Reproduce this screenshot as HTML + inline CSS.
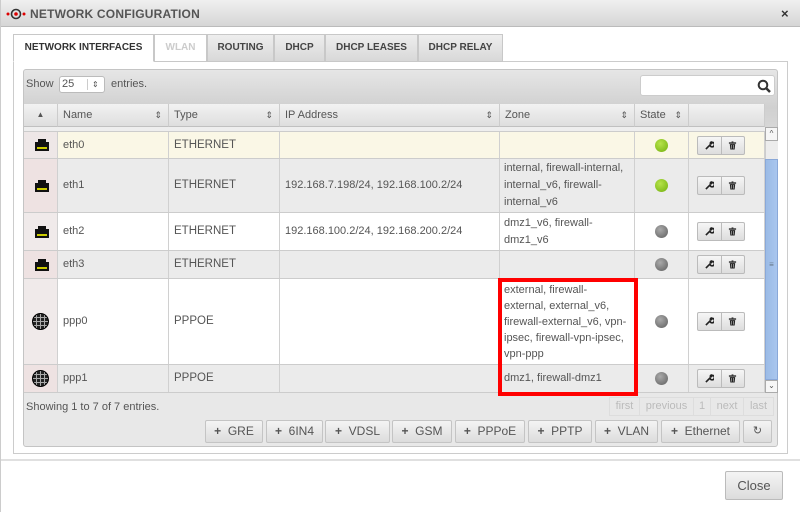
<!DOCTYPE html>
<html><head><meta charset="utf-8"><style>
*{box-sizing:border-box;margin:0;padding:0}
body{width:800px;height:512px;overflow:hidden;background:#fff;font-family:"Liberation Sans",sans-serif;font-size:11px;color:#555;position:relative}
.a{position:absolute}
.title{left:0;top:0;width:800px;height:27px;background:linear-gradient(#f0f0f0,#d6d6d6);border-bottom:1px solid #bbb;border-left:1px solid #ccc}
.tab{top:34px;height:28px;border:1px solid #c8c8c8;background:linear-gradient(#eee,#d8d8d8);font-weight:bold;color:#444;text-align:center;line-height:26px;font-size:10px}
.panel{left:13px;top:61px;width:775px;height:393px;border:1px solid #ccc}
.box{left:23px;top:69px;width:755px;height:378px;border:1px solid #c4c4c4;border-radius:3px;background:linear-gradient(#e6e6e6,#d0d0d0 10%,#e8e8e8 30%)}
.hdr{top:104px;height:23px;background:linear-gradient(#f2f2f2,#dedede);border-bottom:1px solid #c0c0c0;border-right:1px solid #ccc;line-height:22px;padding-left:5px;color:#555;font-size:11px}
.row{left:24px;width:741px;border-bottom:1px solid #ccc}
.c{position:absolute;top:0;bottom:0;border-right:1px solid #d0d0d0;padding-left:5px;display:flex;align-items:center;line-height:17px}
.srt{position:absolute;right:6px;top:0;font-size:9px}
.dot{width:13px;height:13px;border-radius:50%;margin-left:15px}
.g{background:radial-gradient(circle at 40% 35%,#b6e34a,#72b00e)}
.k{background:radial-gradient(circle at 40% 35%,#aaa,#5e5e5e)}
.act{margin-left:8px;width:48px;height:19px;border:1px solid #bbb;border-radius:2px;background:linear-gradient(#f6f6f6,#ddd);display:flex}
.act span{flex:1;display:flex;align-items:center;justify-content:center}
.act span:first-child{border-right:1px solid #bbb}
.btn{top:420px;height:23px;border:1px solid #c4c4c4;border-radius:2px;background:linear-gradient(#f4f4f4,#dcdcdc);text-align:center;line-height:21px;font-size:12px;color:#555}
.eth{width:18px;height:12px;margin-left:4px;position:relative}
.glb{width:17px;height:17px;border-radius:50%;background:#222;margin-left:3px;border:1px solid #000;background-image:repeating-linear-gradient(0deg,transparent 0 3px,#aaa 3px 4px),repeating-linear-gradient(90deg,transparent 0 3px,#aaa 3px 4px)}
</style></head><body>
<div class="a title"></div>
<div class="a" style="left:6px;top:8px;width:20px;height:12px"><svg width="20" height="12"><circle cx="2" cy="6" r="1.5" fill="#d00"/><circle cx="10" cy="6" r="4.5" fill="none" stroke="#333" stroke-width="1.6"/><circle cx="10" cy="6" r="1.8" fill="#d00"/><circle cx="18" cy="6" r="1.5" fill="#d00"/></svg></div>
<div class="a" style="left:30px;top:7px;font-size:12px;font-weight:bold;color:#555;letter-spacing:0.2px">NETWORK CONFIGURATION</div>
<div class="a" style="left:781px;top:6px;font-size:13px;font-weight:bold;color:#333">×</div>

<div class="a panel"></div>
<div class="a tab" style="left:13px;width:141px;background:#fff;border-bottom-color:#fff;height:28px;color:#333">NETWORK INTERFACES</div>
<div class="a tab" style="left:154px;width:53px;background:#fff;color:#ccc">WLAN</div>
<div class="a tab" style="left:207px;width:67px">ROUTING</div>
<div class="a tab" style="left:274px;width:51px">DHCP</div>
<div class="a tab" style="left:325px;width:93px">DHCP LEASES</div>
<div class="a tab" style="left:418px;width:85px">DHCP RELAY</div>

<div class="a box"></div>
<div class="a" style="left:26px;top:78px;font-size:11px">Show</div>
<div class="a" style="left:59px;top:76px;width:46px;height:17px;border:1px solid #bbb;border-radius:3px;background:#fff;font-size:11px;line-height:15px;padding-left:2px">25<span style="position:absolute;left:27px;top:2px;height:11px;border-left:1px solid #ccc"></span><span style="position:absolute;left:32px;top:0;font-size:8px">⇕</span></div>
<div class="a" style="left:111px;top:78px">entries.</div>
<div class="a" style="left:640px;top:75px;width:135px;height:21px;border:1px solid #ccc;border-radius:3px;background:#fff"><svg style="position:absolute;right:3px;top:3px" width="14" height="14"><circle cx="6" cy="6" r="4.3" fill="none" stroke="#333" stroke-width="2"/><line x1="9" y1="9" x2="13" y2="13" stroke="#333" stroke-width="2.5"/></svg></div>

<div class="a hdr" style="left:24px;width:34px;text-align:center;padding:0;font-size:8px">▲</div>
<div class="a hdr" style="left:58px;width:111px">Name<span class="srt">⇕</span></div>
<div class="a hdr" style="left:169px;width:111px">Type<span class="srt">⇕</span></div>
<div class="a hdr" style="left:280px;width:220px">IP Address<span class="srt">⇕</span></div>
<div class="a hdr" style="left:500px;width:135px">Zone<span class="srt">⇕</span></div>
<div class="a hdr" style="left:635px;width:54px">State<span class="srt">⇕</span></div>
<div class="a hdr" style="left:689px;width:76px"></div>
<div class="a" style="left:24px;top:127px;width:741px;height:5px;background:#eee;border-bottom:1px solid #ccc"></div>

<svg width="0" height="0" style="position:absolute"><defs>
<symbol id="w" viewBox="0 0 10 10"><path d="M1 9L6 4M5.5 4.5a2.5 2.5 0 1 0 3-3L7 3 6 3 6 2 7.5 0.5" fill="none" stroke="#222" stroke-width="1.8"/></symbol>
<symbol id="t" viewBox="0 0 10 10"><rect x="1" y="1.5" width="8" height="1.5" fill="#222"/><rect x="4" y="0.5" width="2" height="1" fill="#222"/><path d="M2 3.5h6l-0.6 6h-4.8z" fill="#222"/><path d="M4 4.5v4M6 4.5v4" stroke="#ddd" stroke-width="0.6"/></symbol>
<symbol id="e" viewBox="0 0 18 12"><path d="M5 0h8v3h3v9H2V3h3z" fill="#111"/><rect x="4" y="8" width="10" height="2" fill="#cc0"/></symbol>
</defs></svg>

<div class="a row" style="top:132px;height:27px;background:#faf7e6">
 <div class="c" style="left:0;width:34px;background:#eee7e7"><svg class="eth"><use href="#e"/></svg></div>
 <div class="c" style="left:34px;width:111px">eth0</div><div class="c" style="left:145px;width:111px;font-size:11.5px">ETHERNET</div>
 <div class="c" style="left:256px;width:220px"></div><div class="c" style="left:476px;width:135px"></div>
 <div class="c" style="left:611px;width:54px"><div class="dot g"></div></div><div class="c" style="left:665px;width:76px;padding:0"><div class="act"><span><svg width="9" height="9"><use href="#w"/></svg></span><span><svg width="9" height="9"><use href="#t"/></svg></span></div></div>
</div>
<div class="a row" style="top:159px;height:54px;background:#ebebeb">
 <div class="c" style="left:0;width:34px;background:#eee2e2"><svg class="eth"><use href="#e"/></svg></div>
 <div class="c" style="left:34px;width:111px">eth1</div><div class="c" style="left:145px;width:111px;font-size:11.5px">ETHERNET</div>
 <div class="c" style="left:256px;width:220px">192.168.7.198/24, 192.168.100.2/24</div><div class="c" style="left:476px;width:135px;padding-left:4px">internal, firewall-internal, internal_v6, firewall-internal_v6</div>
 <div class="c" style="left:611px;width:54px"><div class="dot g"></div></div><div class="c" style="left:665px;width:76px;padding:0"><div class="act"><span><svg width="9" height="9"><use href="#w"/></svg></span><span><svg width="9" height="9"><use href="#t"/></svg></span></div></div>
</div>
<div class="a row" style="top:213px;height:38px;background:#fff">
 <div class="c" style="left:0;width:34px;background:#f0eaea"><svg class="eth"><use href="#e"/></svg></div>
 <div class="c" style="left:34px;width:111px">eth2</div><div class="c" style="left:145px;width:111px;font-size:11.5px">ETHERNET</div>
 <div class="c" style="left:256px;width:220px">192.168.100.2/24, 192.168.200.2/24</div><div class="c" style="left:476px;width:135px;padding-left:4px">dmz1_v6, firewall-<br>dmz1_v6</div>
 <div class="c" style="left:611px;width:54px"><div class="dot k"></div></div><div class="c" style="left:665px;width:76px;padding:0"><div class="act"><span><svg width="9" height="9"><use href="#w"/></svg></span><span><svg width="9" height="9"><use href="#t"/></svg></span></div></div>
</div>
<div class="a row" style="top:251px;height:28px;background:#ebebeb">
 <div class="c" style="left:0;width:34px;background:#eee2e2"><svg class="eth"><use href="#e"/></svg></div>
 <div class="c" style="left:34px;width:111px">eth3</div><div class="c" style="left:145px;width:111px;font-size:11.5px">ETHERNET</div>
 <div class="c" style="left:256px;width:220px"></div><div class="c" style="left:476px;width:135px"></div>
 <div class="c" style="left:611px;width:54px"><div class="dot k"></div></div><div class="c" style="left:665px;width:76px;padding:0"><div class="act"><span><svg width="9" height="9"><use href="#w"/></svg></span><span><svg width="9" height="9"><use href="#t"/></svg></span></div></div>
</div>
<div class="a row" style="top:279px;height:86px;background:#fff">
 <div class="c" style="left:0;width:34px;background:#f0eaea"><div class="glb"></div></div>
 <div class="c" style="left:34px;width:111px">ppp0</div><div class="c" style="left:145px;width:111px;font-size:11.5px">PPPOE</div>
 <div class="c" style="left:256px;width:220px"></div><div class="c" style="left:476px;width:135px;padding-left:4px;line-height:16px">external, firewall-<br>external, external_v6,<br>firewall-external_v6, vpn-<br>ipsec, firewall-vpn-ipsec,<br>vpn-ppp</div>
 <div class="c" style="left:611px;width:54px"><div class="dot k"></div></div><div class="c" style="left:665px;width:76px;padding:0"><div class="act"><span><svg width="9" height="9"><use href="#w"/></svg></span><span><svg width="9" height="9"><use href="#t"/></svg></span></div></div>
</div>
<div class="a row" style="top:365px;height:28px;background:#ebebeb">
 <div class="c" style="left:0;width:34px;background:#eee2e2"><div class="glb"></div></div>
 <div class="c" style="left:34px;width:111px">ppp1</div><div class="c" style="left:145px;width:111px;font-size:11.5px">PPPOE</div>
 <div class="c" style="left:256px;width:220px"></div><div class="c" style="left:476px;width:135px;padding-left:4px">dmz1, firewall-dmz1</div>
 <div class="c" style="left:611px;width:54px"><div class="dot k"></div></div><div class="c" style="left:665px;width:76px;padding:0"><div class="act"><span><svg width="9" height="9"><use href="#w"/></svg></span><span><svg width="9" height="9"><use href="#t"/></svg></span></div></div>
</div>
<div class="a" style="left:765px;top:127px;width:13px;height:266px;background:#ececec;border-left:1px solid #ccc"></div>
<div class="a" style="left:765px;top:127px;width:13px;height:14px;border:1px solid #aaa;background:#f6f6f6;font-size:8px;text-align:center;line-height:12px">^</div>
<div class="a" style="left:765px;top:159px;width:13px;height:221px;background:linear-gradient(90deg,#9bbbe6,#a9c6ee);border:1px solid #8aa8d8;color:#678;font-size:8px;text-align:center;padding-top:100px">≡</div>
<div class="a" style="left:765px;top:380px;width:13px;height:13px;border:1px solid #aaa;background:#f6f6f6;font-size:8px;text-align:center;line-height:10px">⌄</div>

<div class="a" style="left:498px;top:278px;width:140px;height:118px;border:4px solid #f00"></div>

<div class="a" style="left:26px;top:401px">Showing 1 to 7 of 7 entries.</div>
<div class="a" style="left:609px;top:397px;width:165px;height:19px;border:1px solid #ddd;display:flex;color:#bbb;font-size:11px;line-height:17px">
<span style="width:30px;text-align:center;border-right:1px solid #ddd">first</span><span style="width:54px;text-align:center;border-right:1px solid #ddd">previous</span><span style="width:17px;text-align:center;border-right:1px solid #ddd">1</span><span style="width:33px;text-align:center;border-right:1px solid #ddd">next</span><span style="flex:1;text-align:center">last</span></div>

<div class="a btn" style="left:205px;width:58px"><b>+</b>&nbsp; GRE</div>
<div class="a btn" style="left:266px;width:57px"><b>+</b>&nbsp; 6IN4</div>
<div class="a btn" style="left:325px;width:65px"><b>+</b>&nbsp; VDSL</div>
<div class="a btn" style="left:392px;width:60px"><b>+</b>&nbsp; GSM</div>
<div class="a btn" style="left:455px;width:70px"><b>+</b>&nbsp; PPPoE</div>
<div class="a btn" style="left:528px;width:64px"><b>+</b>&nbsp; PPTP</div>
<div class="a btn" style="left:595px;width:63px"><b>+</b>&nbsp; VLAN</div>
<div class="a btn" style="left:661px;width:79px"><b>+</b>&nbsp; Ethernet</div>
<div class="a btn" style="left:743px;width:29px;font-size:11px">↻</div>

<div class="a" style="left:0;top:459px;width:800px;height:2px;background:#e0e0e0"></div>
<div class="a" style="left:0;top:0;width:1px;height:512px;background:#ccc"></div>
<div class="a btn" style="left:725px;top:471px;width:58px;height:29px;line-height:27px;font-size:13px;border-color:#bbb">Close</div>
</body></html>
